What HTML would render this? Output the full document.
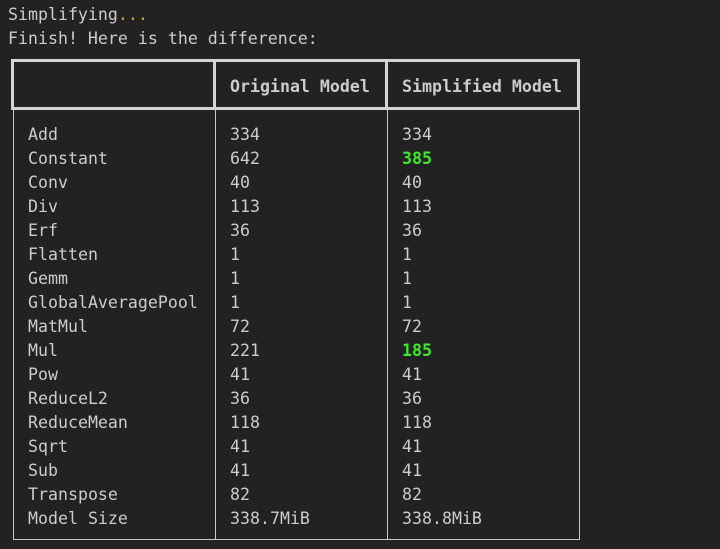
<!DOCTYPE html>
<html><head><style>
body{margin:0;width:720px;height:549px;background:#222222;overflow:hidden;font-family:"DejaVu Sans Mono","Liberation Mono",monospace;font-size:16.6px;color:#cccccc;position:relative}
.t{position:absolute;white-space:pre;line-height:24px}
.b{position:absolute;background:#d4d4d8}
.l{position:absolute;background:#c8c8c8}
.g{color:#3ee82c;font-weight:bold}
</style></head><body>
<div class="t" style="left:8px;top:3px">Simplifying<span style="color:#d7a74a">...</span></div>
<div class="t" style="left:8px;top:27px">Finish! Here is the difference:</div>
<div class="b" style="left:11px;top:59px;width:569px;height:3px"></div>
<div class="b" style="left:11px;top:107px;width:569px;height:3px"></div>
<div class="b" style="left:11px;top:59px;width:3px;height:51px"></div>
<div class="b" style="left:213px;top:59px;width:3px;height:51px"></div>
<div class="b" style="left:385px;top:59px;width:3px;height:51px"></div>
<div class="b" style="left:577px;top:59px;width:3px;height:51px"></div>
<div class="t" style="left:230px;top:75px;font-weight:bold">Original Model</div>
<div class="t" style="left:402px;top:75px;font-weight:bold">Simplified Model</div>
<div class="l" style="left:13px;top:110px;width:1px;height:430px"></div>
<div class="l" style="left:215px;top:110px;width:1px;height:430px"></div>
<div class="l" style="left:387px;top:110px;width:1px;height:430px"></div>
<div class="l" style="left:579px;top:110px;width:1px;height:430px"></div>
<div class="l" style="left:13px;top:539px;width:567px;height:1px"></div>
<div class="t" style="left:28px;top:123px">Add
Constant
Conv
Div
Erf
Flatten
Gemm
GlobalAveragePool
MatMul
Mul
Pow
ReduceL2
ReduceMean
Sqrt
Sub
Transpose
Model Size</div>
<div class="t" style="left:230px;top:123px">334
642
40
113
36
1
1
1
72
221
41
36
118
41
41
82
338.7MiB</div>
<div class="t" style="left:402px;top:123px">334
<span class="g">385</span>
40
113
36
1
1
1
72
<span class="g">185</span>
41
36
118
41
41
82
338.8MiB</div>
</body></html>
